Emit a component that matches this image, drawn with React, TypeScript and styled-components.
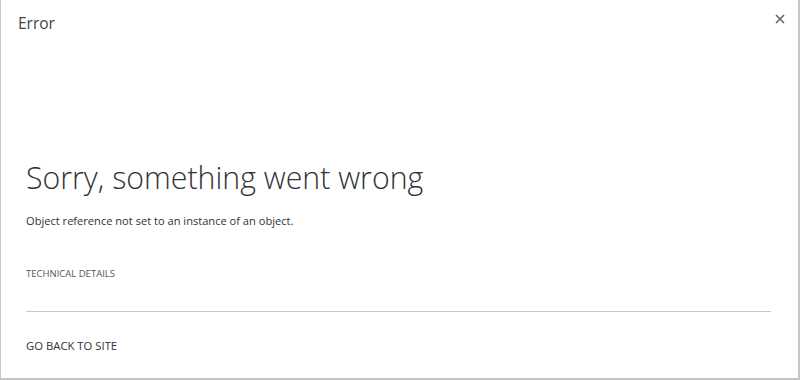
import styled, { createGlobalStyle } from "styled-components";

const GlobalStyle = createGlobalStyle`
  html, body {
    margin: 0;
    padding: 0;
    background: #ffffff;
  }
  body {
    font-family: "Open Sans", "Noto Sans", sans-serif;
    color: #333333;
  }
`;

const Dialog = {
  Frame: styled.div`
    box-sizing: border-box;
    width: 800px;
    height: 380px;
    background: #ffffff;
    border-left: 1px solid #c6c6c6;
    border-right: 2px solid #c6c6c6;
    border-bottom: 2px solid #c6c6c6;
    display: flex;
    flex-direction: column;
  `,
  Header: styled.div`
    display: flex;
    justify-content: space-between;
    align-items: flex-start;
    padding: 12px 11px 0 17px;
    height: 158px;
    box-sizing: border-box;
  `,
  Title: styled.h1`
    margin: 0;
    font-size: 15.5px;
    font-weight: 400;
    line-height: 22px;
    color: #444444;
  `,
  Close: styled.button`
    border: none;
    background: transparent;
    padding: 0;
    width: 14px;
    height: 14px;
    display: flex;
    align-items: center;
    justify-content: center;
    cursor: pointer;
  `,
  Body: styled.div`
    flex: 1;
    display: flex;
    flex-direction: column;
    padding: 0 27px 0 25px;
  `,
  Heading: styled.h2`
    margin: 0;
    font-size: 30.3px;
    font-weight: 300;
    line-height: 40px;
    color: #333333;
  `,
  Message: styled.p`
    margin: 15px 0 0;
    font-size: 11.1px;
    line-height: 16px;
    color: #333333;
  `,
  Label: styled.div`
    margin-top: 38px;
    font-size: 9.5px;
    line-height: 14px;
    color: #555555;
    text-transform: uppercase;
  `,
  Rule: styled.hr`
    margin: 30px 0 0;
    border: none;
    border-top: 1px solid #c8c8c8;
  `,
  Link: styled.a`
    margin-top: 26px;
    font-size: 11.3px;
    line-height: 16px;
    color: #333333;
    text-decoration: none;
    text-transform: uppercase;
  `,
};

const CloseIcon = () => (
  <svg width="10" height="10" viewBox="0 0 10 10">
    <path d="M1 1 L9 9 M9 1 L1 9" stroke="#666666" strokeWidth="1.6" />
  </svg>
);

export default function App() {
  return (
    <>
      <GlobalStyle />
      <Dialog.Frame>
        <Dialog.Header>
          <Dialog.Title>Error</Dialog.Title>
          <Dialog.Close aria-label="Close">
            <CloseIcon />
          </Dialog.Close>
        </Dialog.Header>
        <Dialog.Body>
          <Dialog.Heading>Sorry, something went wrong</Dialog.Heading>
          <Dialog.Message>Object reference not set to an instance of an object.</Dialog.Message>
          <Dialog.Label>Technical Details</Dialog.Label>
          <Dialog.Rule />
          <Dialog.Link href="#">Go back to site</Dialog.Link>
        </Dialog.Body>
      </Dialog.Frame>
    </>
  );
}
